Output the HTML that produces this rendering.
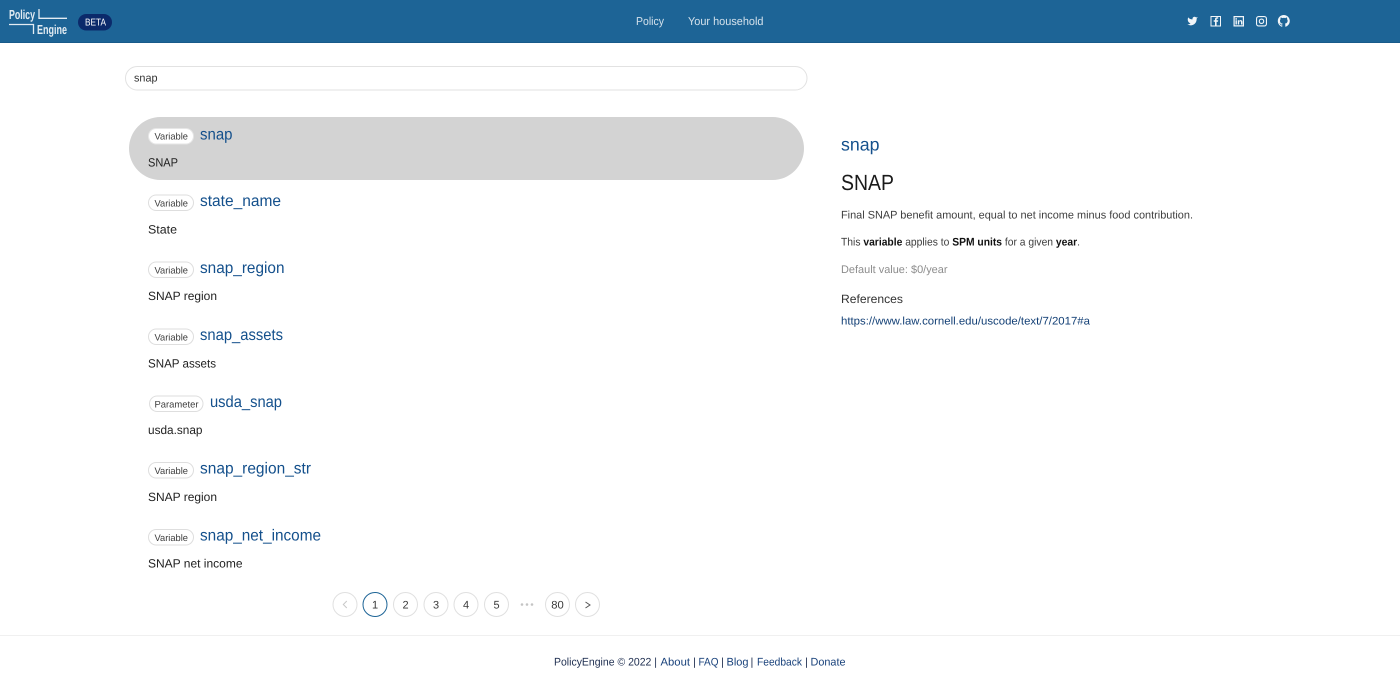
<!DOCTYPE html>
<html lang="en"><head><meta charset="utf-8"><title>PolicyEngine</title>
<style>
html,body{margin:0;padding:0;background:#fff;width:1400px;height:683px;overflow:hidden}
svg{display:block}
text{font-family:"Liberation Sans",Arial,sans-serif;text-rendering:geometricPrecision}
.nav{font-size:11.5px;fill:#d5e2ec}
.pill{fill:#fff;stroke:#dedede;stroke-width:1}
.ptx{font-size:9.5px;fill:#3c3c3c}
.tt{font-size:16px;fill:#14508c}
.sub{font-size:12px;fill:#222}
.pg{fill:#fff;stroke:#e0e0e0;stroke-width:1}
.pt{font-size:11px;fill:#3a3a3a;text-anchor:middle}
.ft{font-size:11px;fill:#1d2d4f}
.fl{font-size:11px;fill:#17407a}
</style></head><body>
<svg width="1400" height="683" viewBox="0 0 1400 683" xmlns="http://www.w3.org/2000/svg">
<rect width="1400" height="43" fill="#1d6496"/>
<rect y="42" width="1400" height="1" fill="#185a8a"/>
<!-- logo -->
<text x="9" y="18.800" font-size="13" font-weight="700" fill="#e3ecf3" textLength="26" lengthAdjust="spacingAndGlyphs">Policy</text>
<text x="37" y="34" font-size="13" font-weight="700" fill="#e3ecf3" textLength="30" lengthAdjust="spacingAndGlyphs">Engine</text>
<path d="M39 9V18.300H67M9 24.500H33.500V34" fill="none" stroke="#e3ecf3" stroke-width="1.300"/>
<rect x="78" y="14" width="34" height="16.500" rx="8.200" fill="#0b2a6b"/>
<text x="85" y="25.700" font-size="10" fill="#fff" textLength="21" lengthAdjust="spacingAndGlyphs">BETA</text>
<!-- nav -->
<text class="nav" x="636" y="25" textLength="28" lengthAdjust="spacingAndGlyphs">Policy</text>
<text class="nav" x="688" y="25" textLength="75.500" lengthAdjust="spacingAndGlyphs">Your household</text>
<!-- social -->
<g fill="#f2f6f9">
<path transform="translate(1186.800 15.500) scale(.47)" d="M23 3a10.900 10.900 0 0 1-3 1.300 4.500 4.500 0 0 0-7.900 3v1A10.700 10.700 0 0 1 3 4s-4 9 5 13a11.600 11.600 0 0 1-7 2c9 5 20 0 20-11.500a4.500 4.500 0 0 0-.1-.8A7.700 7.700 0 0 0 23 3z"/>
<path fill-rule="evenodd" d="M1210.500 16h10.500v10.500h-10.500zM1211.500 17v8.500h3.500v-3.700h-1.300v-1.500h1.300v-1.100c0-1.400.8-2 2-2h1.200v1.400h-.8c-.6 0-.8.200-.8.700v1h1.600l-.2 1.500h-1.400v3.700h3.400V17z"/>
<path fill-rule="evenodd" d="M1233.500 16h10.500v10.500h-10.500zM1234.700 17.200v8.100h8.100v-8.100zM1235.500 20.300h1.400v4.200h-1.400zM1235.400 18.300h1.600v1.300h-1.600zM1237.800 20.300h1.300v.6c.4-.5.900-.8 1.600-.8 1.300 0 1.700.9 1.700 2.100v2.300h-1.400v-2.100c0-.7-.2-1.100-.8-1.100s-1 .4-1 1.100v2.100h-1.400z"/>
<path fill-rule="evenodd" d="M1258.700 16h5.600a2.700 2.700 0 0 1 2.700 2.700v5.100a2.700 2.700 0 0 1-2.700 2.700h-5.600a2.700 2.700 0 0 1-2.700-2.700v-5.100a2.700 2.700 0 0 1 2.700-2.700zM1258.800 17.100a1.700 1.700 0 0 0-1.700 1.700v4.900a1.700 1.700 0 0 0 1.700 1.700h5.400a1.700 1.700 0 0 0 1.700-1.700v-4.900a1.700 1.700 0 0 0-1.700-1.700zM1261.500 18.500a2.750 2.750 0 1 1 0 5.500 2.750 2.750 0 0 1 0-5.500zM1261.500 19.600a1.650 1.650 0 1 0 0 3.300 1.650 1.650 0 0 0 0-3.300z"/>
<path transform="translate(1277.800 15) scale(.75)" d="M8 0C3.580 0 0 3.580 0 8c0 3.540 2.290 6.530 5.470 7.590.4.070.55-.17.55-.38 0-.19-.01-.82-.01-1.490-2.010.37-2.530-.49-2.690-.94-.09-.23-.48-.94-.82-1.130-.28-.15-.68-.52-.01-.53.63-.01 1.080.58 1.230.82.720 1.210 1.870.87 2.330.66.070-.52.28-.87.51-1.070-1.780-.2-3.640-.89-3.640-3.950 0-.87.31-1.590.82-2.150-.08-.2-.36-1.020.08-2.120 0 0 .67-.21 2.200.82.64-.18 1.320-.27 2-.27s1.360.09 2 .27c1.530-1.040 2.200-.82 2.200-.82.44 1.100.16 1.920.08 2.120.51.56.82 1.270.82 2.150 0 3.070-1.870 3.750-3.650 3.950.29.25.54.73.54 1.480 0 1.070-.01 1.930-.01 2.200 0 .21.15.46.55.38A8.013 8.013 0 0 0 16 8c0-4.420-3.580-8-8-8z"/>
</g>
<!-- search -->
<rect x="125.500" y="66.500" width="681.500" height="23.500" rx="11.700" fill="#fff" stroke="#e2e2e2"/>
<text x="134" y="81.700" font-size="11" fill="#333" textLength="23.500" lengthAdjust="spacingAndGlyphs">snap</text>
<!-- results -->
<rect x="129" y="117" width="675" height="63" rx="31.500" fill="#d3d3d3"/>
<rect class="pill" x="148.500" y="128.500" width="45" height="15.500" rx="7.700" style="stroke:#e6e6e6"/>
<text class="ptx" x="154.500" y="139.500" textLength="33.500" lengthAdjust="spacingAndGlyphs">Variable</text>
<text class="tt" x="200" y="139.500" textLength="32.500" lengthAdjust="spacingAndGlyphs">snap</text>
<text class="sub" x="148" y="166.500" textLength="30" lengthAdjust="spacingAndGlyphs">SNAP</text>

<rect class="pill" x="148.500" y="195" width="45" height="15.500" rx="7.700"/>
<text class="ptx" x="154.500" y="206.300" textLength="33.500" lengthAdjust="spacingAndGlyphs">Variable</text>
<text class="tt" x="200" y="206" textLength="81" lengthAdjust="spacingAndGlyphs">state_name</text>
<text class="sub" x="148" y="233.500" textLength="29" lengthAdjust="spacingAndGlyphs">State</text>

<rect class="pill" x="148.500" y="262" width="45" height="15.500" rx="7.700"/>
<text class="ptx" x="154.500" y="273.300" textLength="33.500" lengthAdjust="spacingAndGlyphs">Variable</text>
<text class="tt" x="200" y="273" textLength="84.500" lengthAdjust="spacingAndGlyphs">snap_region</text>
<text class="sub" x="148" y="300" textLength="69" lengthAdjust="spacingAndGlyphs">SNAP region</text>

<rect class="pill" x="148.500" y="329" width="45" height="15.500" rx="7.700"/>
<text class="ptx" x="154.500" y="340.300" textLength="33.500" lengthAdjust="spacingAndGlyphs">Variable</text>
<text class="tt" x="200" y="340" textLength="83" lengthAdjust="spacingAndGlyphs">snap_assets</text>
<text class="sub" x="148" y="367.500" textLength="68" lengthAdjust="spacingAndGlyphs">SNAP assets</text>

<rect class="pill" x="149.500" y="396" width="53.500" height="15.500" rx="7.700"/>
<text class="ptx" x="154.500" y="407.300" textLength="44" lengthAdjust="spacingAndGlyphs">Parameter</text>
<text class="tt" x="210" y="407" textLength="72" lengthAdjust="spacingAndGlyphs">usda_snap</text>
<text class="sub" x="148" y="434" textLength="54.500" lengthAdjust="spacingAndGlyphs">usda.snap</text>

<rect class="pill" x="148.500" y="462.500" width="45" height="15.500" rx="7.700"/>
<text class="ptx" x="154.500" y="474" textLength="33.500" lengthAdjust="spacingAndGlyphs">Variable</text>
<text class="tt" x="200" y="473.700" textLength="111" lengthAdjust="spacingAndGlyphs">snap_region_str</text>
<text class="sub" x="148" y="501" textLength="69" lengthAdjust="spacingAndGlyphs">SNAP region</text>

<rect class="pill" x="148.500" y="529.500" width="45" height="15.500" rx="7.700"/>
<text class="ptx" x="154.500" y="541" textLength="33.500" lengthAdjust="spacingAndGlyphs">Variable</text>
<text class="tt" x="200" y="540.500" textLength="121" lengthAdjust="spacingAndGlyphs">snap_net_income</text>
<text class="sub" x="148" y="567.500" textLength="94.500" lengthAdjust="spacingAndGlyphs">SNAP net income</text>

<!-- pagination -->
<circle class="pg" cx="345" cy="604.500" r="12"/>
<path d="M346.800 601L343.300 604.500L346.800 608" fill="none" stroke="#c8c8c8"/>
<circle class="pg" cx="375" cy="604.500" r="12" style="stroke:#1d6496"/>
<text class="pt" x="375" y="608.500">1</text>
<circle class="pg" cx="405.500" cy="604.500" r="12"/><text class="pt" x="405.500" y="608.500">2</text>
<circle class="pg" cx="436" cy="604.500" r="12"/><text class="pt" x="436" y="608.500">3</text>
<circle class="pg" cx="466" cy="604.500" r="12"/><text class="pt" x="466" y="608.500">4</text>
<circle class="pg" cx="496.500" cy="604.500" r="12"/><text class="pt" x="496.500" y="608.500">5</text>
<g fill="#c4c4c4"><circle cx="522" cy="604.500" r="1.300"/><circle cx="527" cy="604.500" r="1.300"/><circle cx="532" cy="604.500" r="1.300"/></g>
<circle class="pg" cx="557.500" cy="604.500" r="12"/><text class="pt" x="557.500" y="608.500" textLength="12.500" lengthAdjust="spacingAndGlyphs">80</text>
<circle class="pg" cx="587.500" cy="604.500" r="12"/>
<path d="M585.500 602L590 605L585.500 608" fill="none" stroke="#555"/>
<!-- detail -->
<text x="841" y="150.500" font-size="18" fill="#14508c" textLength="38.500" lengthAdjust="spacingAndGlyphs">snap</text>
<text x="841" y="190" font-size="22" fill="#1a1a1a" textLength="53" lengthAdjust="spacingAndGlyphs">SNAP</text>
<text x="841" y="218.500" font-size="11" fill="#3d3d3d" textLength="352" lengthAdjust="spacingAndGlyphs">Final SNAP benefit amount, equal to net income minus food contribution.</text>
<text x="841" y="245.500" font-size="11" fill="#3d3d3d" textLength="239" lengthAdjust="spacingAndGlyphs">This <tspan font-weight="700" fill="#111">variable</tspan> applies to <tspan font-weight="700" fill="#111">SPM units</tspan> for a given <tspan font-weight="700" fill="#111">year</tspan>.</text>
<text x="841" y="273" font-size="11" fill="#8c8c8c" textLength="106.500" lengthAdjust="spacingAndGlyphs">Default value: $0/year</text>
<text x="841" y="303" font-size="12" fill="#333" textLength="62" lengthAdjust="spacingAndGlyphs">References</text>
<text x="841" y="324.500" font-size="11" fill="#123f75" textLength="249" lengthAdjust="spacingAndGlyphs">https://www.law.cornell.edu/uscode/text/7/2017#a</text>
<!-- footer -->
<rect y="635" width="1400" height="1" fill="#f0f0f0"/>
<text class="ft" x="554" y="665.500" textLength="103" lengthAdjust="spacingAndGlyphs">PolicyEngine © 2022 |</text>
<text class="fl" x="660.500" y="665.500" textLength="29.500" lengthAdjust="spacingAndGlyphs">About</text>
<text class="ft" x="693" y="665.500">|</text>
<text class="fl" x="698.500" y="665.500" textLength="20" lengthAdjust="spacingAndGlyphs">FAQ</text>
<text class="ft" x="721" y="665.500">|</text>
<text class="fl" x="726.500" y="665.500" textLength="22" lengthAdjust="spacingAndGlyphs">Blog</text>
<text class="ft" x="750.500" y="665.500">|</text>
<text class="fl" x="757" y="665.500" textLength="45" lengthAdjust="spacingAndGlyphs">Feedback</text>
<text class="ft" x="805" y="665.500">|</text>
<text class="fl" x="810.500" y="665.500" textLength="35" lengthAdjust="spacingAndGlyphs">Donate</text>
</svg>
</body></html>
